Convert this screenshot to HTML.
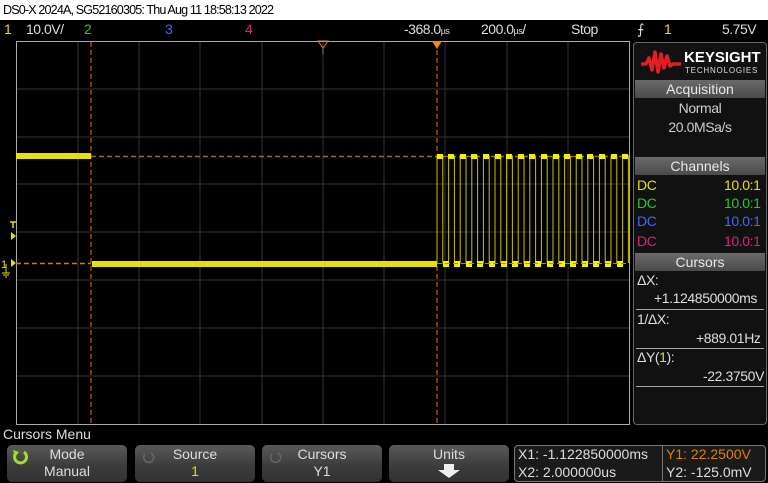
<!DOCTYPE html>
<html><head><meta charset="utf-8"><style>
*{margin:0;padding:0;box-sizing:border-box}
body{width:768px;height:483px;background:#000;overflow:hidden;font-family:"Liberation Sans Narrow","Liberation Sans",sans-serif;position:relative;color:#ddd}
.t{position:absolute;white-space:nowrap}
#top{position:absolute;left:0;top:0;width:768px;height:20px;background:#fff;color:#000;font-size:13px;line-height:20px;padding-left:3px;letter-spacing:-0.9px}
#top span{display:inline-block;transform:scaleX(0.97);transform-origin:left}
.hdr{font-size:14px;top:21px;letter-spacing:-0.5px}
.panel{position:absolute;left:633px;top:42px;width:134px;height:383px;border:1px solid #666;border-radius:4px;background:#111}
.ph{position:absolute;left:635px;width:130px;height:18px;background:linear-gradient(#6a6a6a,#4a4a4a);color:#e8e8e8;font-size:14px;text-align:center;line-height:18px}
.pt{position:absolute;font-size:14px;letter-spacing:-0.4px}
.sk{position:absolute;top:445px;width:120px;height:37px;border-radius:5px;background:linear-gradient(#5a5a5a,#3a3a3a 60%,#333);color:#ddd;font-size:14px;text-align:center;line-height:17px;padding-top:1px}
</style></head><body>
<div id="top"><span>DS0-X 2024A, SG52160305: Thu Aug 11 18:58:13 2022</span></div>
<div class="t hdr" style="left:4px;color:#e8e000">1</div>
<div class="t hdr" style="left:26px;color:#ddd">10.0V/</div>
<div class="t hdr" style="left:84px;color:#22cc22">2</div>
<div class="t hdr" style="left:165px;color:#4466ff">3</div>
<div class="t hdr" style="left:245px;color:#e0207a">4</div>
<div class="t hdr" style="left:404px">-368.0<span style="font-size:9px">µs</span></div>
<div class="t hdr" style="left:481px">200.0<span style="font-size:9px">µs</span>/</div>
<div class="t hdr" style="left:571px">Stop</div>
<div class="t hdr" style="left:637px;color:#ddd">&#x2A0D;</div>
<div class="t hdr" style="left:664px;color:#e8e000">1</div>
<div class="t hdr" style="left:722px">5.75V</div>

<svg width="768" height="483" style="position:absolute;left:0;top:0">
<g stroke="#333" stroke-width="1">
<line x1="78" y1="42" x2="78" y2="424"/><line x1="139" y1="42" x2="139" y2="424"/><line x1="200" y1="42" x2="200" y2="424"/><line x1="262" y1="42" x2="262" y2="424"/><line x1="323" y1="42" x2="323" y2="424"/><line x1="384" y1="42" x2="384" y2="424"/><line x1="445" y1="42" x2="445" y2="424"/><line x1="507" y1="42" x2="507" y2="424"/><line x1="568" y1="42" x2="568" y2="424"/>
<line x1="16" y1="89" x2="629" y2="89"/><line x1="16" y1="137" x2="629" y2="137"/><line x1="16" y1="184" x2="629" y2="184"/><line x1="16" y1="232" x2="629" y2="232"/><line x1="16" y1="280" x2="629" y2="280"/><line x1="16" y1="328" x2="629" y2="328"/><line x1="16" y1="376" x2="629" y2="376"/>
</g>
<rect x="16.5" y="41.5" width="613" height="383" fill="none" stroke="#aaa" stroke-width="1"/>
<line x1="91" y1="42" x2="91" y2="424" stroke="#e07800" stroke-dasharray="5,3"/>
<line x1="437" y1="42" x2="437" y2="424" stroke="#e07800" stroke-dasharray="5,3"/>
<line x1="91" y1="156.5" x2="629" y2="156.5" stroke="#a06828" stroke-dasharray="5,3" stroke-width="1.5"/>
<line x1="16" y1="263.5" x2="91" y2="263.5" stroke="#e07800" stroke-dasharray="5,3" stroke-width="1.5"/>
<rect x="16" y="153" width="75" height="6" fill="#e8e000"/>
<rect x="92" y="261" width="345" height="6" fill="#e8e000"/>
<path d="M437 263 V156 H442.8 V263 H448.6 V156 H454.4 V263 H460.2 V156 H466 V263 H471.8 V156 H477.6 V263 H483.4 V156 H489.2 V263 H495 V156 H500.8 V263 H506.6 V156 H512.4 V263 H518.2 V156 H524 V263 H529.8 V156 H535.6 V263 H541.4 V156 H547.2 V263 H553 V156 H558.8 V263 H564.6 V156 H570.4 V263 H576.2 V156 H582 V263 H587.8 V156 H593.6 V263 H599.4 V156 H605.2 V263 H611 V156 H616.8 V263 H622.6 V156 H628.4 V263" fill="none" stroke="#c8c000" stroke-width="1"/>
<g fill="#f0f000">
<rect x="437" y="154" width="6" height="5"/><rect x="448" y="154" width="6" height="5"/><rect x="460" y="154" width="6" height="5"/><rect x="471" y="154" width="6" height="5"/><rect x="483" y="154" width="6" height="5"/><rect x="495" y="154" width="6" height="5"/><rect x="506" y="154" width="6" height="5"/><rect x="518" y="154" width="6" height="5"/><rect x="529" y="154" width="6" height="5"/><rect x="541" y="154" width="6" height="5"/><rect x="553" y="154" width="6" height="5"/><rect x="564" y="154" width="6" height="5"/><rect x="576" y="154" width="6" height="5"/><rect x="587" y="154" width="6" height="5"/><rect x="599" y="154" width="6" height="5"/><rect x="611" y="154" width="6" height="5"/><rect x="622" y="154" width="6" height="5"/>
<rect x="443" y="261" width="6" height="6"/><rect x="454" y="261" width="6" height="6"/><rect x="466" y="261" width="6" height="6"/><rect x="477" y="261" width="6" height="6"/><rect x="489" y="261" width="6" height="6"/><rect x="501" y="261" width="6" height="6"/><rect x="512" y="261" width="6" height="6"/><rect x="524" y="261" width="6" height="6"/><rect x="535" y="261" width="6" height="6"/><rect x="547" y="261" width="6" height="6"/><rect x="559" y="261" width="6" height="6"/><rect x="570" y="261" width="6" height="6"/><rect x="582" y="261" width="6" height="6"/><rect x="593" y="261" width="6" height="6"/><rect x="605" y="261" width="6" height="6"/><rect x="617" y="261" width="6" height="6"/>
</g>
<line x1="437" y1="263.5" x2="629" y2="263.5" stroke="#e07800" stroke-dasharray="5,3"/>
<path d="M318 41 L328 41 L323 48 Z" fill="none" stroke="#e08000"/>
<line x1="323" y1="48" x2="323" y2="54" stroke="#888"/>
<path d="M432 41 L442 41 L437 49 Z" fill="#ff8800"/>
<path d="M10 222 H16 M13 222 V228" stroke="#e8e000" stroke-width="1.5"/>
<path d="M11 232 L16 236 L11 240 Z" fill="#e8e000"/>
<path d="M11 259 L16 263 L11 267 Z" fill="#e8e000"/>
<text x="1" y="268" fill="#e8e000" font-size="11" font-family="Liberation Sans">1</text>
<path d="M6 264 V273 M2 273 H10 M3 275 H9 M5 277 H7" stroke="#e8e000" stroke-width="1"/>
</svg>

<div class="panel"></div>
<svg width="128" height="34" style="position:absolute;left:637px;top:44px">
<path d="M4 20 L9 20 L12 14 L15 26 L18 8 L21 28 L24 10 L27 24 L30 12 L33 22 L36 20 L44 20" fill="none" stroke="#e41c24" stroke-width="3.5" stroke-linejoin="round"/>
<text x="47" y="18" fill="#fff" font-size="15" font-weight="bold" font-family="Liberation Sans">KEYSIGHT</text>
<text x="48" y="29" fill="#ddd" font-size="8" font-family="Liberation Sans" letter-spacing="0.8">TECHNOLOGIES</text>
</svg>
<div class="ph" style="top:80px">Acquisition</div>
<div class="pt" style="left:633px;width:134px;text-align:center;top:100px;color:#ccc">Normal</div>
<div class="pt" style="left:633px;width:134px;text-align:center;top:119px;color:#ccc">20.0MSa/s</div>
<div class="ph" style="top:157px">Channels</div>
<div class="pt" style="left:637px;top:177px;color:#e8e000">DC</div><div class="pt" style="left:724px;top:177px;color:#e8e000">10.0:1</div>
<div class="pt" style="left:637px;top:195px;color:#22cc22">DC</div><div class="pt" style="left:724px;top:195px;color:#22cc22">10.0:1</div>
<div class="pt" style="left:637px;top:213px;color:#4466ff">DC</div><div class="pt" style="left:724px;top:213px;color:#4466ff">10.0:1</div>
<div class="pt" style="left:637px;top:233px;color:#e0207a">DC</div><div class="pt" style="left:724px;top:233px;color:#e0207a">10.0:1</div>
<div class="ph" style="top:253px">Cursors</div>
<div class="pt" style="left:637px;top:272px">ΔX:</div>
<div class="pt" style="left:654px;top:290px">+1.124850000ms</div>
<div style="position:absolute;left:636px;top:309px;width:128px;height:1px;background:#aaa"></div>
<div class="pt" style="left:637px;top:311px">1/ΔX:</div>
<div class="pt" style="left:696px;top:330px">+889.01Hz</div>
<div style="position:absolute;left:636px;top:348px;width:128px;height:1px;background:#aaa"></div>
<div class="pt" style="left:637px;top:349px">ΔY(<span style="color:#e8e000">1</span>):</div>
<div class="pt" style="left:703px;top:368px">-22.3750V</div>
<div style="position:absolute;left:636px;top:386px;width:128px;height:1px;background:#aaa"></div>

<div class="t" style="left:3px;top:426px;font-size:14px;color:#ddd">Cursors Menu</div>
<div class="sk" style="left:7px">Mode<br>Manual</div>
<svg width="20" height="20" style="position:absolute;left:10px;top:448px"><path d="M14 4 A6 6 0 1 1 6 5" fill="none" stroke="#a0e020" stroke-width="3"/><path d="M3 2 L9 4 L5 9Z" fill="#a0e020"/></svg>
<div class="sk" style="left:135px">Source<br><span style="color:#e8e000">1</span></div>
<svg width="16" height="16" style="position:absolute;left:140px;top:450px"><path d="M11 3 A5 5 0 1 1 5 4" fill="none" stroke="#666" stroke-width="1.5"/></svg>
<div class="sk" style="left:262px">Cursors<br>Y1</div>
<svg width="16" height="16" style="position:absolute;left:267px;top:450px"><path d="M11 3 A5 5 0 1 1 5 4" fill="none" stroke="#666" stroke-width="1.5"/></svg>
<div class="sk" style="left:389px">Units<br><svg width="24" height="16"><path d="M7 1 H17 V7 H23 L12 15 L1 7 H7Z" fill="#eee"/></svg></div>
<div style="position:absolute;left:514px;top:445px;width:252px;height:37px;border:1px solid #777;border-radius:4px;background:#1a1a1a"></div>
<div style="position:absolute;left:662px;top:445px;width:1px;height:37px;background:#777"></div>
<div class="t" style="left:518px;top:446px;font-size:14px;color:#ddd">X1: -1.122850000ms</div>
<div class="t" style="left:518px;top:464px;font-size:14px;color:#ddd">X2: 2.000000us</div>
<div class="t" style="left:666px;top:446px;font-size:14px;color:#e08000">Y1: 22.2500V</div>
<div class="t" style="left:666px;top:464px;font-size:14px;color:#ddd">Y2: -125.0mV</div>
</body></html>
